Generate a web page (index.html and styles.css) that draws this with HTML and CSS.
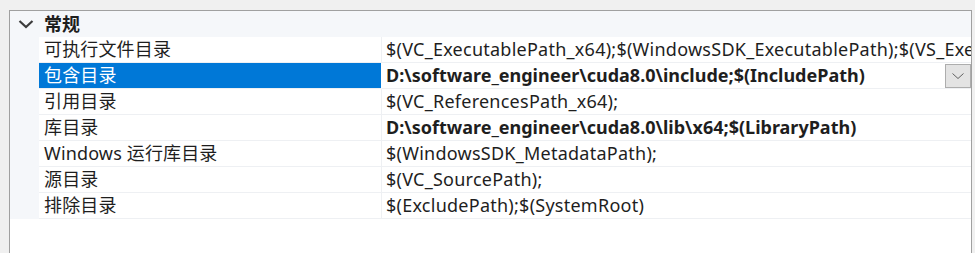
FILE: index.html
```html
<!DOCTYPE html>
<html lang="zh-CN">
<head>
<meta charset="utf-8">
<link rel="stylesheet" href="styles.css">
</head>
<body>
<div class="panel">
  <div class="category">
    <span class="toggle"><svg width="16" height="10" viewBox="0 0 16 10"><path d="M1.5 2 L8 8 L14.5 2" fill="none" stroke="#3c3c3c" stroke-width="2.2"/></svg></span>
    <span class="cat-title">常规</span>
  </div>
  <div class="grid">
    <div class="row">
      <div class="gutter"></div>
      <div class="name">可执行文件目录</div>
      <div class="value">$(VC_ExecutablePath_x64);$(WindowsSDK_ExecutablePath);$(VS_ExecutablePath);$(MSBuild_ExecutablePath);$(FxCopDir);$(PATH);</div>
    </div>
    <div class="row selected">
      <div class="gutter"></div>
      <div class="name">包含目录</div>
      <div class="value bold">D:\software_engineer\cuda8.0\include;$(IncludePath)
        <span class="dropdown"><svg width="12" height="6" viewBox="0 0 12 6"><path d="M0.5 0.5 L6 5.5 L11.5 0.5" fill="none" stroke="#606060" stroke-width="1"/></svg></span>
      </div>
    </div>
    <div class="row">
      <div class="gutter"></div>
      <div class="name">引用目录</div>
      <div class="value">$(VC_ReferencesPath_x64);</div>
    </div>
    <div class="row">
      <div class="gutter"></div>
      <div class="name">库目录</div>
      <div class="value bold">D:\software_engineer\cuda8.0\lib\x64;$(LibraryPath)</div>
    </div>
    <div class="row">
      <div class="gutter"></div>
      <div class="name">Windows 运行库目录</div>
      <div class="value">$(WindowsSDK_MetadataPath);</div>
    </div>
    <div class="row">
      <div class="gutter"></div>
      <div class="name">源目录</div>
      <div class="value">$(VC_SourcePath);</div>
    </div>
    <div class="row">
      <div class="gutter"></div>
      <div class="name">排除目录</div>
      <div class="value">$(ExcludePath);$(SystemRoot)</div>
    </div>
  </div>
</div>
</body>
</html>
```

FILE: styles.css
```css
html, body {
  margin: 0;
  padding: 0;
  background: #f0f0f0;
  height: 253px;
  overflow: hidden;
}
body {
  padding: 10px 0 0 9px;
  box-sizing: border-box;
  font-family: "Noto Sans", "Noto Sans CJK SC", sans-serif;
  font-size: 18px;
  color: #1e1e1e;
}
.panel {
  width: 961px;
  height: 243px;
  box-sizing: content-box;
  border: 1px solid #a0a0a0;
  border-bottom: none;
  background: #ffffff;
  overflow: hidden;
}
.category {
  height: 26px;
  background: #f5f7fa;
  display: flex;
  align-items: center;
}
.toggle {
  width: 29px;
  display: flex;
  justify-content: center;
  padding-left: 3px;
  box-sizing: border-box;
}
.toggle svg { display: block; }
.cat-title {
  font-weight: bold;
  padding-left: 5px;
  line-height: 26px;
}
.row {
  display: flex;
  height: 26px;
  line-height: 25px;
}
.gutter {
  width: 29px;
  flex: none;
  background: #f5f7fa;
}
.name {
  width: 343px;
  flex: none;
  padding-left: 5px;
  box-sizing: border-box;
  border-bottom: 1px solid #eef0f3;
  border-right: 1px solid #eef0f3;
  white-space: nowrap;
  letter-spacing: 0.15px;
}
.value {
  flex: 1;
  min-width: 0;
  padding-left: 4px;
  border-bottom: 1px solid #eef0f3;
  white-space: nowrap;
  overflow: hidden;
  position: relative;
  letter-spacing: 0.25px;
}
.bold {
  font-weight: bold;
  letter-spacing: 0;
}
.selected .name {
  background: #0078d7;
  color: #ffffff;
  border-right-color: #ffffff;
}
.dropdown {
  position: absolute;
  right: 0;
  top: 1px;
  width: 24px;
  height: 22px;
  background: #e3e3e3;
  border: 1px solid #adadad;
  display: flex;
  align-items: center;
  justify-content: center;
}
.dropdown svg { display: block; }
```
